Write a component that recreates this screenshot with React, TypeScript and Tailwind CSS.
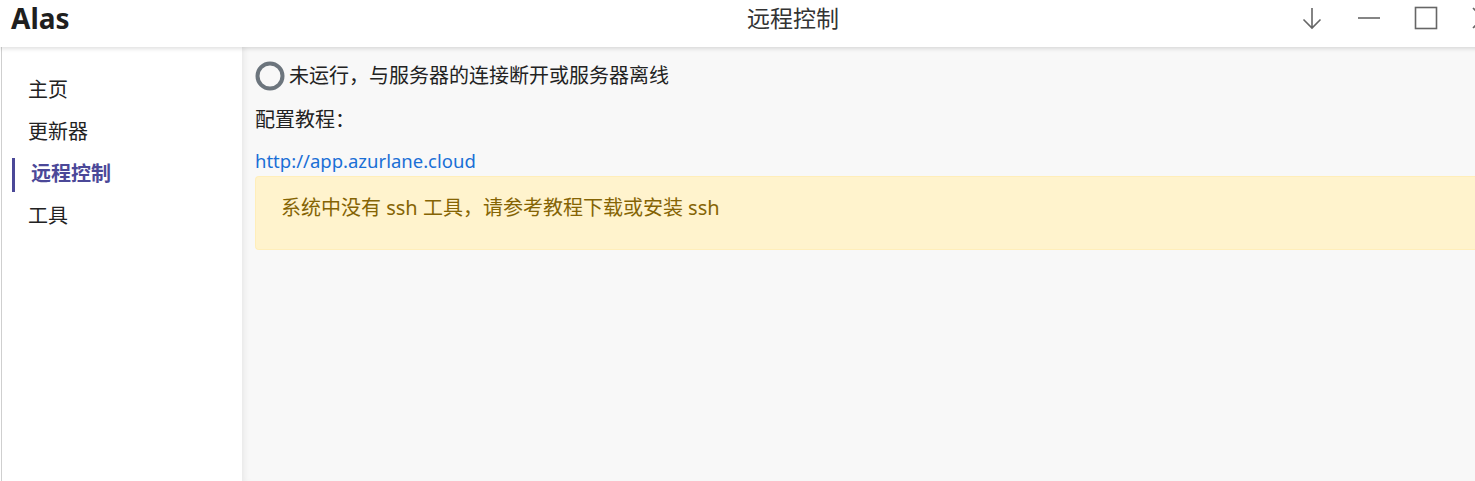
import React from 'react';

const font = { fontFamily: '"Noto Sans", "Noto Sans CJK SC", sans-serif' };

const navItems = ['主页', '更新器', '远程控制', '工具'];

function TitleBar() {
  return (
    <div className="relative z-10 flex h-[47px] items-center bg-white pb-[11px] shadow-[0_2px_4px_rgba(0,0,0,0.12)]">
      <div className="w-[747px] shrink-0 pl-[11px] text-[28px] font-bold leading-none text-[#1f1f1f]">Alas</div>
      <div className="text-[23px] leading-none text-[#333]">远程控制</div>
      <div className="flex-1" />
      <div className="flex items-center gap-[33px] pr-[5px] text-[#666]">
        <svg width="24" height="24" viewBox="0 0 24 24" fill="none" stroke="currentColor" strokeWidth="1.6">
          <path d="M12 2v20M3.5 13.5L12 22l8.5-8.5" />
        </svg>
        <svg width="24" height="24" viewBox="0 0 24 24" fill="none" stroke="currentColor" strokeWidth="1.6">
          <path d="M1 12h22" />
        </svg>
        <svg width="24" height="24" viewBox="0 0 24 24" fill="none" stroke="currentColor" strokeWidth="1.6">
          <rect x="1.5" y="1.5" width="21" height="21" />
        </svg>
        <svg width="24" height="24" viewBox="0 0 24 24" fill="none" stroke="currentColor" strokeWidth="1.6">
          <path d="M2 2l20 20M22 2L2 22" />
        </svg>
      </div>
    </div>
  );
}

function Sidebar() {
  return (
    <div className="ml-px w-[241px] shrink-0 border-l border-[#cfcfcf] bg-white pt-[22px]">
      {navItems.map((item) => {
        const active = item === '远程控制';
        return (
          <div key={item} className="flex h-[42px] items-center">
            {active ? (
              <>
                <div className="ml-[10px] mt-[1px] h-[34px] w-[3px] bg-[#4b4898]" />
                <span className="pl-[16px] text-[20px] font-bold text-[#4b4898]">{item}</span>
              </>
            ) : (
              <span className="pl-[26px] text-[20px] text-[#222]">{item}</span>
            )}
          </div>
        );
      })}
    </div>
  );
}

function Main() {
  return (
    <div className="flex-1 bg-[#f8f8f8] pl-[13px] pt-[14px] shadow-[inset_6px_0_6px_-4px_rgba(0,0,0,0.07)]">
      <div className="flex h-[30px] items-center gap-[4px]">
        <svg width="30" height="30" viewBox="0 0 30 30">
          <circle cx="15" cy="15" r="12.5" fill="none" stroke="#6c757d" strokeWidth="4" />
        </svg>
        <span className="text-[20px] text-[#222]">未运行，与服务器的连接断开或服务器离线</span>
      </div>
      <div className="mt-[15px] text-[20px] leading-[28px] text-[#222]">配置教程：</div>
      <div className="mt-[15px] text-[18.5px] leading-[24px] text-[#1a6fd6]">http://app.azurlane.cloud</div>
      <div className="mt-[3px] h-[74px] rounded-l-[4px] border border-r-0 border-[#ffeeba] bg-[#fff3cd] pl-[25px] pt-[17px] text-[20px] leading-[28px] text-[#856404]">
        系统中没有 ssh 工具，请参考教程下载或安装 ssh
      </div>
    </div>
  );
}

export default function App() {
  return (
    <div className="h-[481px] w-screen overflow-hidden" style={font}>
      <div className="flex h-full w-[1500px] flex-col">
        <TitleBar />
        <div className="flex flex-1">
          <Sidebar />
          <Main />
        </div>
      </div>
    </div>
  );
}
